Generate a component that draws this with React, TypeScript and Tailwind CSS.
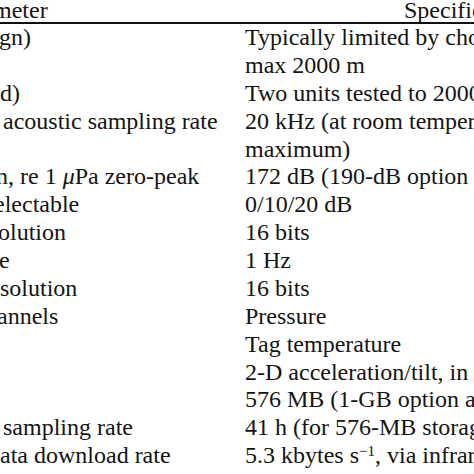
import React from "react";

interface Row {
  param: React.ReactNode;
  shift: string;
  spec: React.ReactNode;
}

const rows: Row[] = [
  { param: "gn)", shift: "-ml-[1px]", spec: "Typically limited by choice of housing;" },
  { param: "", shift: "", spec: "max 2000 m" },
  { param: "d)", shift: "ml-0", spec: "Two units tested to 2000 m" },
  { param: "acoustic sampling rate", shift: "ml-[3px]", spec: "20 kHz (at room temperature; 10 kHz" },
  { param: "", shift: "", spec: "maximum)" },
  {
    param: (
      <>
        n, re 1 <i>μ</i>Pa zero-peak
      </>
    ),
    shift: "-ml-[4px]",
    spec: "172 dB (190-dB option available)",
  },
  { param: "electable", shift: "-ml-[6px]", spec: "0/10/20 dB" },
  { param: "olution", shift: "-ml-[2px]", spec: "16 bits" },
  { param: "e", shift: "-ml-[1px]", spec: "1 Hz" },
  { param: "solution", shift: "ml-0", spec: "16 bits" },
  { param: "annels", shift: "-ml-[3px]", spec: "Pressure" },
  { param: "", shift: "", spec: "Tag temperature" },
  {
    param: "",
    shift: "",
    spec: (
      <>
        2-D acceleration/tilt, in <i>x</i>–<i>y</i> plane
      </>
    ),
  },
  { param: "", shift: "", spec: "576 MB (1-GB option available)" },
  { param: "sampling rate", shift: "ml-[3px]", spec: "41 h (for 576-MB storage)" },
  {
    param: "ata download rate",
    shift: "ml-0",
    spec: (
      <>
        5.3 kbytes s<sup className="text-[15px]">−1</sup>, via infrared
      </>
    ),
  },
];

export default function App() {
  return (
    <div
      className="w-[474px] h-[474px] overflow-hidden bg-white text-[#141414] text-[24px]"
      style={{ fontFamily: '"Liberation Serif", "Times New Roman", serif' }}
    >
      {/* header */}
      <div className="grid grid-cols-[245px_1fr] h-[24px] leading-[20px] border-b-2 border-[#111]">
        <div className="whitespace-nowrap overflow-hidden">
          <div className="-ml-[7px]">meter</div>
        </div>
        <div className="whitespace-nowrap overflow-hidden pl-[159px]">Specification</div>
      </div>

      {/* body */}
      <div className="flex flex-col">
        {rows.map((r, i) => (
          <div key={i} className="grid grid-cols-[245px_1fr] leading-[27.87px] whitespace-nowrap">
            <div className="overflow-hidden">
              <div className={r.shift}>{r.param}</div>
            </div>
            <div className="overflow-hidden">{r.spec}</div>
          </div>
        ))}
      </div>
    </div>
  );
}
